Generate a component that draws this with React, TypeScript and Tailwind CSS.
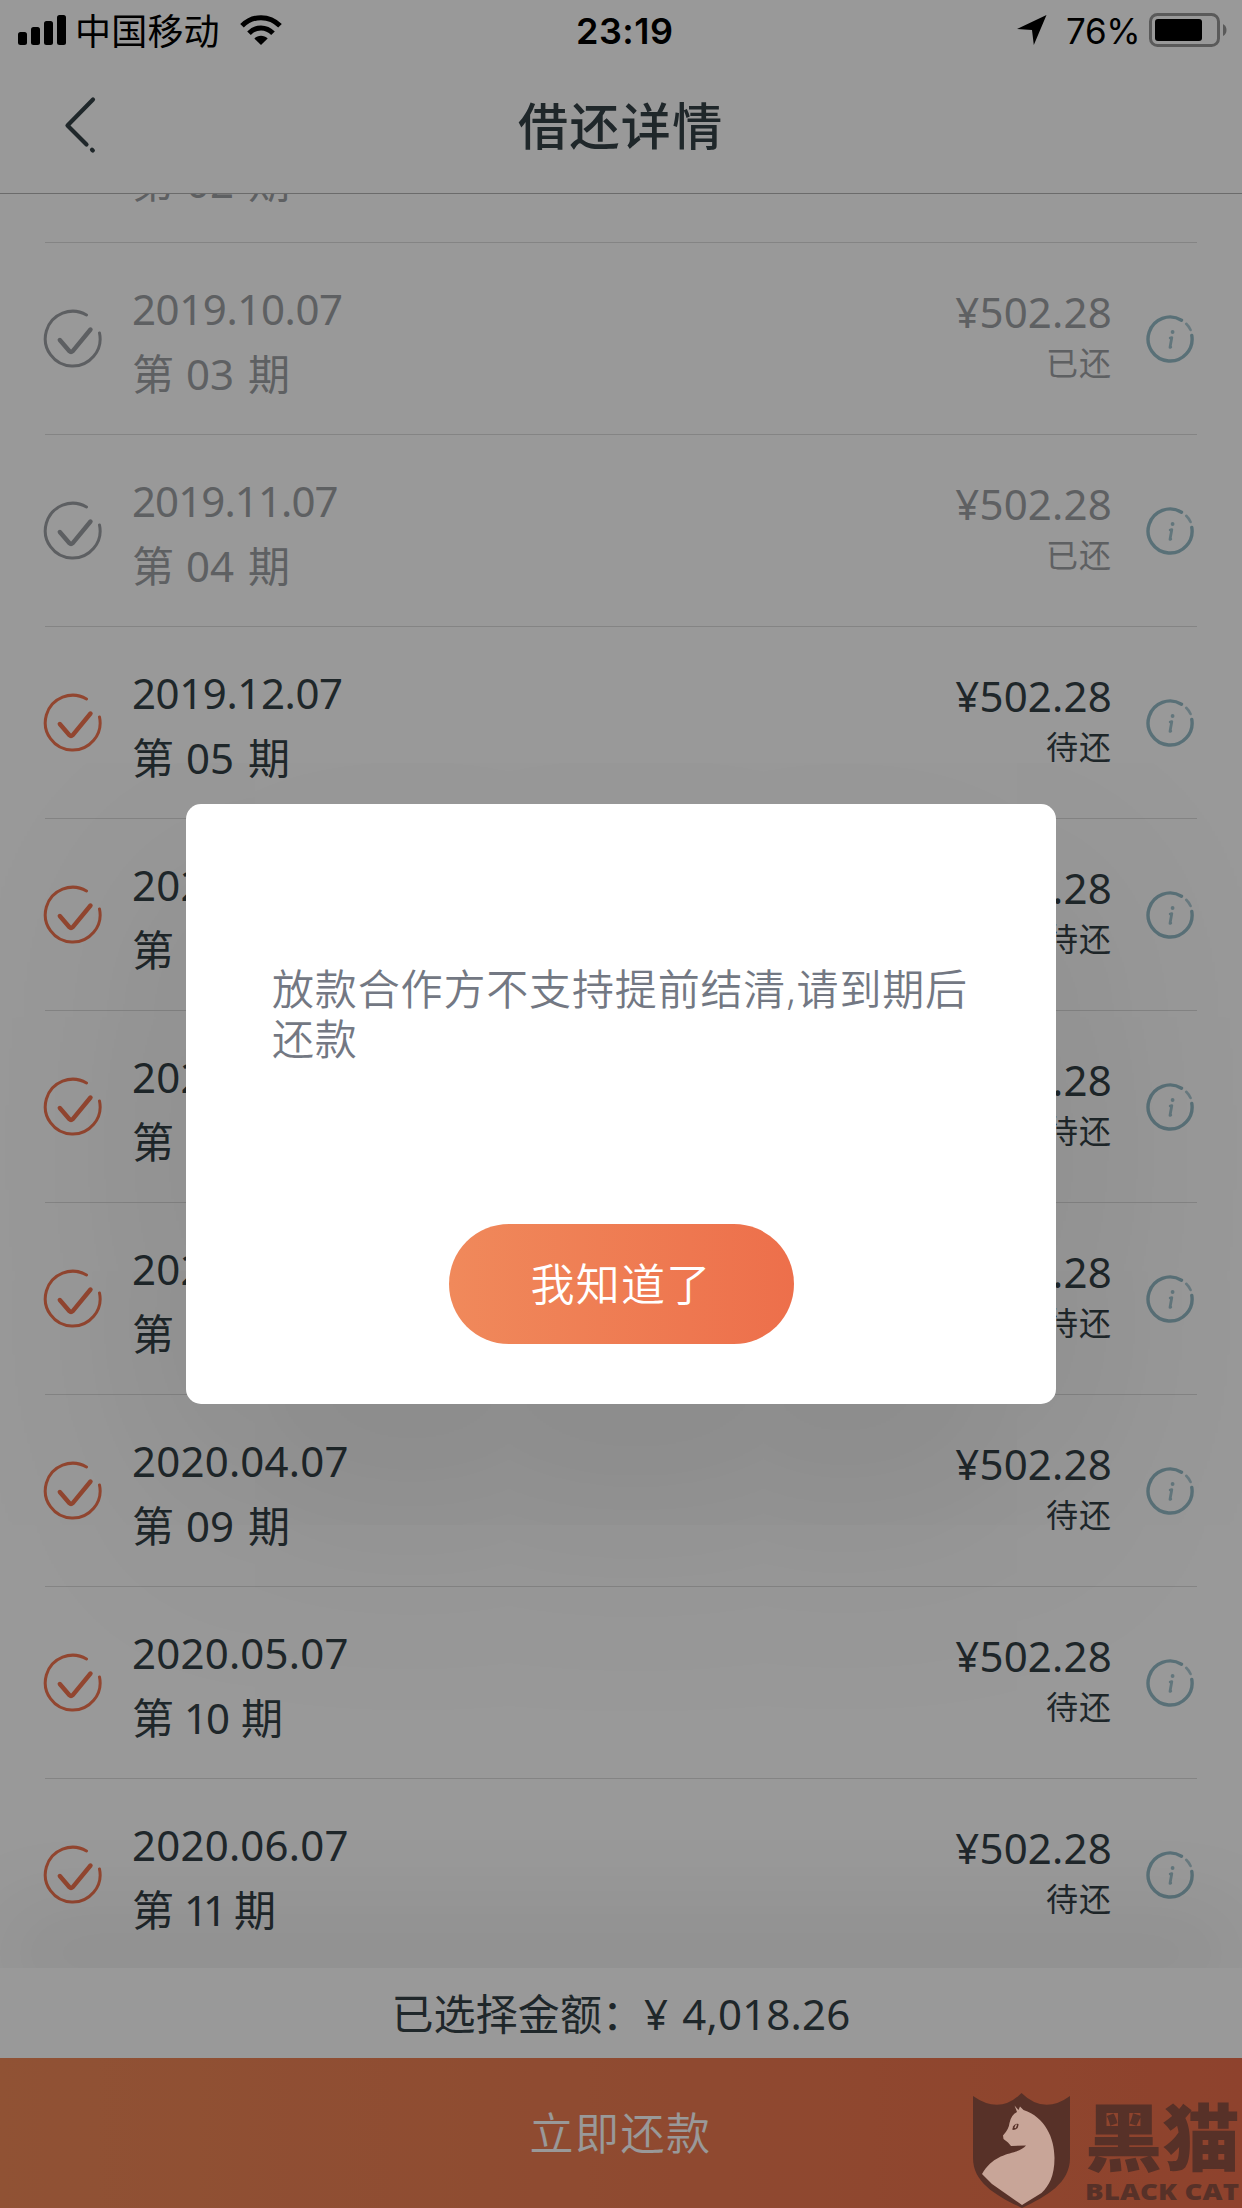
import React from "react";

type Row = { date: string; no: string; paid?: boolean; dateCls?: string; noCls?: string };

const rows: Row[] = [
  { date: "2019.09.07", no: "02", paid: true },
  { date: "2019.10.07", no: "03", paid: true, dateCls: "tracking-[-0.4px]" },
  { date: "2019.11.07", no: "04", paid: true, dateCls: "tracking-[-0.9px]" },
  { date: "2019.12.07", no: "05", dateCls: "tracking-[-0.4px]" },
  { date: "2020.01.07", no: "06" },
  { date: "2020.02.07", no: "07" },
  { date: "2020.03.07", no: "08" },
  { date: "2020.04.07", no: "09" },
  { date: "2020.05.07", no: "10", noCls: "ml-[10px] mr-[13px] tracking-[-2px]" },
  { date: "2020.06.07", no: "11", noCls: "ml-[10px] mr-[12px] tracking-[-5px]" },
];

function Check({ muted }: { muted?: boolean }) {
  return (
    <svg viewBox="0 0 60 60" className={"h-[60px] w-[60px] shrink-0 " + (muted ? "text-[#9c9fa3]" : "text-[#f37550]")} fill="none" stroke="currentColor" strokeLinecap="round" strokeLinejoin="round">
      <path d="M43.5 6A27.4 27.4 0 1 0 56.5 24" strokeWidth="3" />
      <path d="M16.8 31L26.5 42.3Q28 43.8 29.5 42.3L47.5 20.5" strokeWidth="4.4" />
    </svg>
  );
}

function Info() {
  return (
    <svg viewBox="0 0 48 48" className="h-12 w-12 shrink-0 text-[#94bbc7]" fill="none" stroke="currentColor" strokeLinecap="round">
      <path d="M35.5 5.2A22 22 0 1 0 45.8 20.5" strokeWidth="3.4" />
      <path d="M40.2 8.8Q43 11.5 44.6 15" strokeWidth="2.6" opacity=".75" />
      <g opacity=".85">
        <circle cx="26.6" cy="17" r="1.9" fill="currentColor" stroke="none" />
        <path d="M24.2 23L25.8 22.6L24 32.4L24.8 32.2" strokeWidth="2.8" strokeLinejoin="round" />
      </g>
    </svg>
  );
}

function StatusBar() {
  return (
    <div className="flex h-[60px] items-center text-black">
      <svg viewBox="0 0 48 30" className="ml-[18px] h-[30px] w-12" fill="currentColor">
        <rect x="0" y="17" width="9" height="13" rx="2.5" />
        <rect x="13" y="12" width="9" height="18" rx="2.5" />
        <rect x="26" y="6" width="9" height="24" rx="2.5" />
        <rect x="39" y="0" width="9" height="30" rx="2.5" />
      </svg>
      <span className="ml-[9px] mt-[3px] w-[144px] text-[36px] leading-[60px] tracking-[0.2px] whitespace-nowrap">中国移动</span>
      <svg viewBox="0 0 42 30" className="ml-[21px] h-[30px] w-[42px]" fill="none" stroke="currentColor" strokeWidth="5">
        <path d="M2 10.8C12.5-.1 29.5-.1 40 10.8" />
        <path d="M9 18.2C15.8 11.1 26.2 11.1 33 18.2" />
        <path d="M14.3 23.6C18 19.8 24 19.8 27.7 23.6L21 30Z" fill="currentColor" stroke="none" />
      </svg>
      <span className="ml-[294px] mt-[2px] w-[101px] font-[Inter] text-[36px] leading-[60px] font-semibold tracking-[0.5px]">23:19</span>
      <svg viewBox="0 0 30 30" className="ml-[340px] h-[30px] w-[30px]" fill="currentColor">
        <path d="M29.5 0L16.8 30L15 15L0 14Z" />
      </svg>
      <span className="ml-[19px] mt-[2px] w-[74px] font-[Inter] text-[35px] leading-[60px] tracking-[-0.3px]">76%</span>
      <svg viewBox="0 0 78 34" className="ml-[9px] h-[34px] w-[78px]" fill="none">
        <rect x="1.5" y="1.5" width="68" height="31" rx="7" stroke="#969696" strokeWidth="3" />
        <rect x="6" y="6" width="47" height="22" rx="3" fill="#000" />
        <path d="M74 11Q77.5 13 77.5 17T74 23Z" fill="#969696" />
      </svg>
    </div>
  );
}

function ListRow({ row }: { row: Row }) {
  const color = row.paid ? "text-[#9da0a4]" : "text-[#354147]";
  return (
    <div className={"mx-[45px] flex h-48 items-start border-b border-[#dcdcdc] " + color}>
      <div className="-ml-[2px] mt-[66px] h-[60px] w-[60px]"><Check muted={row.paid} /></div>
      <div className="ml-[29px] mt-[33px] text-[42px] leading-[65px] whitespace-pre">
        <div className={row.dateCls ?? "tracking-[0.2px]"}>{row.date}</div>
        <div>第<span className={row.noCls ?? "ml-[12px] mr-[14px]"}>{row.no}</span>期</div>
      </div>
      <div className="ml-auto mt-[36px] text-right">
        <div className="text-[42px] leading-[65px] tracking-[0.2px]">¥502.28</div>
        <div className="mt-[-6px] text-[32px] leading-[50px] tracking-[1px]">{row.paid ? "已还" : "待还"}</div>
      </div>
      <div className="ml-[34px] mt-[72px] mr-[3px]"><Info /></div>
    </div>
  );
}

function Watermark() {
  return (
    <div className="absolute right-0 bottom-0 flex h-[116px] w-[270px] items-start text-[#573128]">
      <svg viewBox="0 0 98 116" className="h-[116px] w-[98px] shrink-0">
        <path d="M1 4Q28 23 49.5 1Q72 23 98 4V66C98 91 75 104 50 116C25 104 1 91 1 66Z" fill="#573128" />
        <path d="M42.5 13.5L46.5 18L48 14.5L51.5 18C73 25 82.5 46 82.5 66C82.5 84 77 94 69.5 101L50 113L20 92L10 82C20 65 33 63 44 59.5Q51 57 54 53.5L39 54L36 50.5L31.5 47L31 43.5Q37 37 37.5 31Q39 23 45 20Z" fill="#c8a598" />
        <path d="M40.5 36.5Q42 31 46.5 32Q46.5 38 40.5 38Z" fill="#573128" />
        <path d="M43 36L44.5 32.5" stroke="#c8a598" strokeWidth="1.5" />
      </svg>
      <div className="ml-[15px] w-[157px] whitespace-nowrap">
        <div className="h-[86px] origin-left scale-x-[1.06] font-['Noto_Sans_CJK_SC'] text-[73px] leading-[82px] font-black">黑猫</div>
        <div className="origin-left scale-x-[1.2] font-['Open_Sans'] text-[23px] leading-[26px] font-extrabold tracking-[0.1px]">BLACK CAT</div>
      </div>
    </div>
  );
}

export default function App() {
  return (
    <div className="relative flex h-[2208px] w-[1242px] flex-col overflow-hidden bg-white font-['Noto_Sans','Noto_Sans_CJK_SC',sans-serif]">
      <header className="relative z-10 h-[194px] border-b border-[#b3b3b3] bg-white">
        <StatusBar />
        <div className="flex h-[133px] items-start">
          <svg viewBox="0 0 32 58" className="ml-16 mt-9 h-[58px] w-8" fill="none" stroke="#354147" strokeWidth="4.2" strokeLinecap="round" strokeLinejoin="round">
            <path d="M29 3.5L3.5 29.5L22.5 48.5M28 53.8L28.8 54.6" />
          </svg>
          <h1 className="ml-[422px] mt-[29px] text-[50px] leading-[74px] font-medium tracking-[1.4px] text-[#354147] whitespace-nowrap">借还详情</h1>
        </div>
      </header>
      <main className="h-[1774px] overflow-hidden">
        <div className="-mt-[143px]">
          {rows.map((r) => <ListRow key={r.date} row={r} />)}
        </div>
      </main>
      <section className="relative flex h-[90px] shrink-0 items-center justify-center bg-white text-[42px] tracking-[0.1px] text-[#354147] shadow-[0_-60px_90px_rgba(0,0,0,0.065)] whitespace-pre">
        已选择金额：<span>¥</span><span className="ml-[14px] tracking-[0.2px]">4,018.26</span>
      </section>
      <button className="relative h-[150px] shrink-0 bg-linear-to-r from-[#f08958] to-[#ed6f4b] text-[44px] font-[350] tracking-[1.5px] text-white"><span className="-ml-px">立即还款</span></button>
      <div className="absolute inset-0 z-20 flex items-center justify-center bg-black/40">
        <div className="flex h-[600px] w-[870px] flex-col items-center rounded-[15px] bg-white shadow-[0_90px_240px_rgba(0,0,0,0.13)]">
          <p className="mt-[160px] ml-[2px] h-[260px] w-[700px] text-[42px] leading-[50px] font-[350] tracking-[0.85px] text-[#737883]">放款合作方不支持提前结清,请到期后还款</p>
          <button className="h-[120px] w-[345px] rounded-full bg-linear-to-r from-[#f0895b] to-[#ed6f4b] text-[44px] font-[350] tracking-[1.3px] text-white">我知道了</button>
        </div>
        <Watermark />
      </div>
    </div>
  );
}
